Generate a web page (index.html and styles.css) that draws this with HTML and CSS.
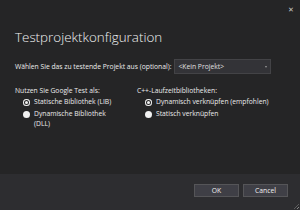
FILE: index.html
```html
<!DOCTYPE html>
<html lang="de">
<head>
<meta charset="utf-8">
<link rel="stylesheet" href="styles.css">
</head>
<body>
<div class="dialog">
  <div class="main">
    <span class="close">&#x2715;</span>
    <h1 class="title">Testprojektkonfiguration</h1>
    <div class="project-row">
      <span class="label">Wählen Sie das zu testende Projekt aus (optional):</span>
      <div class="select"><span>&lt;Kein Projekt&gt;</span><span class="arrow"></span></div>
    </div>
    <div class="columns">
      <div class="group">
        <div class="group-title">Nutzen Sie Google Test als:</div>
        <div class="option"><span class="radio checked"></span><span>Statische Bibliothek (LIB)</span></div>
        <div class="option"><span class="radio"></span><span>Dynamische Bibliothek<br>(DLL)</span></div>
      </div>
      <div class="group">
        <div class="group-title">C++-Laufzeitbibliotheken:</div>
        <div class="option"><span class="radio checked"></span><span>Dynamisch verknüpfen (empfohlen)</span></div>
        <div class="option"><span class="radio"></span><span>Statisch verknüpfen</span></div>
      </div>
    </div>
  </div>
  <div class="footer">
    <button class="btn">OK</button>
    <button class="btn">Cancel</button>
    <span class="grip"></span>
  </div>
</div>
</body>
</html>
```
FILE: styles.css
```css
html, body {
  margin: 0;
  padding: 0;
}
body {
  width: 300px;
  height: 210px;
  background: #252526;
  color: #ececec;
  font-family: "Open Sans", "Noto Sans", sans-serif;
  font-size: 6.75px;
  overflow: hidden;
}
.dialog {
  display: flex;
  flex-direction: column;
  height: 210px;
  position: relative;
}
.main {
  flex: 1;
  padding: 0 15px;
}
.close {
  position: absolute;
  top: 5px;
  right: 6px;
  font-size: 7px;
  color: #c8c8c8;
}
.title {
  margin: 27px 0 0 0;
  font-size: 13.4px;
  font-weight: 300;
  line-height: 20px;
  color: #f1f1f1;
}
.project-row {
  display: flex;
  align-items: center;
  margin-top: 12px;
  gap: 3px;
}
.select {
  width: 97px;
  height: 15px;
  box-sizing: border-box;
  background: #333337;
  border: 1px solid #434346;
  display: flex;
  align-items: center;
  justify-content: space-between;
  padding: 0 3px;
  color: #e0e0e0;
}
.arrow {
  width: 0;
  height: 0;
  border-left: 1.5px solid transparent;
  border-right: 1.5px solid transparent;
  border-top: 2px solid #999;
}
.columns {
  display: grid;
  grid-template-columns: 122px 1fr;
  margin-top: 11px;
}
.group-title {
  line-height: 11px;
}
.option {
  display: flex;
  align-items: flex-start;
  gap: 4px;
  padding-left: 8px;
  margin-top: 1px;
  line-height: 10px;
}
.option + .option {
  margin-top: 2px;
}
.radio {
  flex: none;
  width: 7px;
  height: 7px;
  border-radius: 50%;
  background: #f1f1f1;
  margin-top: 1.5px;
  box-sizing: border-box;
}
.radio.checked {
  background: #f1f1f1;
  box-shadow: inset 0 0 0 1px #f1f1f1, inset 0 0 0 2px #252526;
}
.footer {
  height: 36px;
  background: #2d2d30;
  display: flex;
  justify-content: flex-end;
  align-items: flex-start;
  gap: 4px;
  padding: 10px 12px 0 0;
  box-sizing: border-box;
  position: relative;
}
.btn {
  width: 45px;
  height: 13px;
  background: #3f3f46;
  border: 1px solid #555558;
  color: #f1f1f1;
  font-family: "Open Sans", "Noto Sans", sans-serif;
  font-size: 6.75px;
  padding: 0;
  line-height: 11px;
}
.grip {
  position: absolute;
  right: 1px;
  bottom: 1px;
  width: 5px;
  height: 5px;
  background: repeating-linear-gradient(135deg, transparent 0 1px, #8a8a8a 1px 2px);
  clip-path: polygon(100% 0, 100% 100%, 0 100%);
}
```
